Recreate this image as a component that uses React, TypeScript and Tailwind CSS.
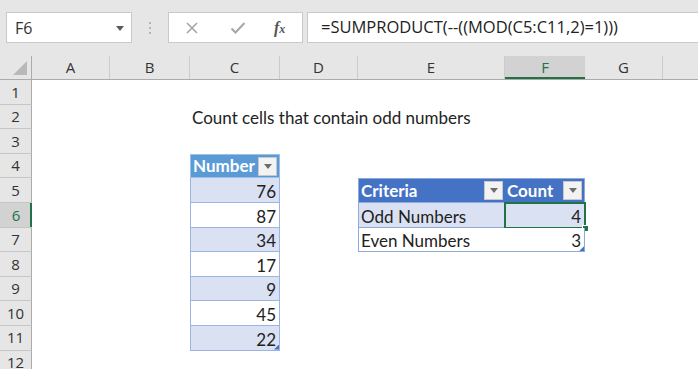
import React from 'react';

const cols = [
  { k: 'A', w: 'w-[78px]' },
  { k: 'B', w: 'w-[80px]' },
  { k: 'C', w: 'w-[90px]' },
  { k: 'D', w: 'w-[78px]' },
  { k: 'E', w: 'w-[147px]' },
  { k: 'F', w: 'w-[80px]' },
  { k: 'G', w: 'w-[78px]' },
  { k: 'H', w: 'w-[80px]' },
];

const rows = [1, 2, 3, 4, 5, 6, 7, 8, 9, 10, 11, 12];
const numbers: Record<number, string> = { 5: '76', 6: '87', 7: '34', 8: '17', 9: '9', 10: '45', 11: '22' };

const DropBtn = () => (
  <span className="absolute right-[2px] top-[2px] flex h-[19px] w-[19px] items-center justify-center border border-[#c8c8c8] bg-[#f3f3f3]">
    <span className="h-0 w-0 border-x-[4px] border-t-[5px] border-x-transparent border-t-[#6d6d6d]" />
  </span>
);

const ResizeMark = () => (
  <span className="absolute bottom-0 right-0 h-[5px] w-[5px] bg-[#4472c4] [clip-path:polygon(100%_0,100%_100%,0_100%)]" />
);

const renderCell = (r: number, c: string) => {
  // title text spills over from C2
  if (c === 'C' && r === 2)
    return (
      <span className="absolute bottom-[3px] left-[2px] whitespace-nowrap leading-[17px]">
        Count cells that contain odd numbers
      </span>
    );

  // first table: C4:C11
  if (c === 'C' && r === 4)
    return (
      <div className="absolute inset-0 flex items-center border border-[#9bc2e6] bg-[#5b9bd5] pl-[2px] font-bold text-white">
        Number
        <DropBtn />
      </div>
    );
  if (c === 'C' && r >= 5 && r <= 11)
    return (
      <div
        className={
          'absolute inset-0 flex items-end justify-end border-x border-b border-[#9db4e2] pb-[2px] pr-[3px] leading-[17px] ' +
          (r % 2 === 1 ? 'bg-[#d9e1f2]' : 'bg-white')
        }
      >
        {numbers[r]}
        {r === 11 && <ResizeMark />}
      </div>
    );

  // second table: E5:F7
  if (r === 5 && (c === 'E' || c === 'F'))
    return (
      <div
        className={
          'absolute inset-0 flex items-center border-y border-[#8eaadb] bg-[#4472c4] pl-[2px] font-bold text-white ' +
          (c === 'E' ? 'border-l' : 'border-r')
        }
      >
        {c === 'E' ? 'Criteria' : 'Count'}
        <DropBtn />
      </div>
    );
  if ((r === 6 || r === 7) && c === 'E')
    return (
      <div
        className={
          'absolute inset-0 flex items-end border-b border-l border-[#8eaadb] pb-[2px] pl-[2px] leading-[17px] ' +
          (r === 6 ? 'bg-[#d9e1f2]' : 'bg-white')
        }
      >
        {r === 6 ? 'Odd Numbers' : 'Even Numbers'}
      </div>
    );
  if ((r === 6 || r === 7) && c === 'F')
    return (
      <div
        className={
          'absolute inset-0 flex items-end justify-end border-b border-r border-[#8eaadb] pb-[2px] pr-[3px] leading-[17px] ' +
          (r === 6 ? 'bg-[#d9e1f2]' : 'bg-white')
        }
      >
        {r === 6 ? '4' : '3'}
        {r === 7 && <ResizeMark />}
      </div>
    );
  return null;
};

export default function App() {
  return (
    <div className="h-[369px] w-[698px] overflow-hidden bg-white font-['Open_Sans',sans-serif] text-[#222]">
      {/* formula bar */}
      <div className="flex h-[56px] items-start bg-[#e6e6e6] pl-[6px] pt-[12px]">
        <div className="relative flex h-[31px] w-[126px] items-center border border-[#c9c9c9] bg-white pl-[8px] text-[16px] text-[#333]">
          F6
          <span className="absolute right-[7px] top-[13px] h-0 w-0 border-x-[4px] border-t-[5px] border-x-transparent border-t-[#5a5a5a]" />
        </div>
        <div className="ml-[17px] mr-[17px] flex h-[31px] flex-col items-center justify-center gap-[3px]">
          <span className="h-[2px] w-[2px] bg-[#b4b4b4]" />
          <span className="h-[2px] w-[2px] bg-[#b4b4b4]" />
          <span className="h-[2px] w-[2px] bg-[#b4b4b4]" />
        </div>
        <div className="flex h-[31px] w-[135px] items-center border border-[#c9c9c9] bg-white">
          <svg width="14" height="14" viewBox="0 0 14 14" className="ml-[16px]">
            <path d="M2 2 L12 12 M12 2 L2 12" stroke="#a6a6a6" strokeWidth="1.6" fill="none" />
          </svg>
          <svg width="16" height="14" viewBox="0 0 16 14" className="ml-[31px]">
            <path d="M1.5 7.5 L5.5 11.5 L14.5 2" stroke="#a6a6a6" strokeWidth="2" fill="none" />
          </svg>
          <span className="ml-[28px] font-['Liberation_Serif',serif] text-[16px] font-bold italic text-[#555]">
            f<span className="text-[12px]">x</span>
          </span>
        </div>
        <div className="ml-[4px] flex h-[31px] flex-1 items-center border border-r-0 border-[#c9c9c9] bg-white pl-[13px] text-[16.5px] text-[#222]">
          =SUMPRODUCT(--((MOD(C5:C11,2)=1)))
        </div>
      </div>

      {/* column headers */}
      <div className="flex h-[24px] border-b border-[#ababab] bg-[#e6e6e6] text-[15px] text-[#333]">
        <div className="relative w-[32px] shrink-0 border-r border-[#ababab]">
          <span className="absolute bottom-[4px] right-[4px] h-[14px] w-[14px] bg-[#b9b9b9] [clip-path:polygon(100%_0,100%_100%,0_100%)]" />
        </div>
        {cols.map((col) => (
          <div
            key={col.k}
            className={
              col.w +
              ' relative flex shrink-0 items-center justify-center ' +
              (col.k === 'F'
                ? 'bg-[#d2d2d2] text-[#217346] shadow-[inset_0_-2px_0_#217346]'
                : 'border-r border-[#cbcbcb]')
            }
          >
            {col.k}
          </div>
        ))}
      </div>

      {/* rows */}
      {rows.map((r) => (
        <div key={r} className="flex h-[24.6px]">
          <div
            className={
              'flex w-[32px] shrink-0 items-center justify-center border-b text-[15px] ' +
              (r === 6
                ? 'border-b-[#c6c6c6] bg-[#d2d2d2] text-[#217346] shadow-[inset_-2px_0_0_#217346]'
                : 'border-r border-b-[#c6c6c6] border-r-[#ababab] bg-[#e6e6e6] text-[#333]')
            }
          >
            {r}
          </div>
          {cols.map((col) => (
            <div key={col.k} className={col.w + " relative shrink-0 font-['Lato',sans-serif] text-[17px] text-[#222]"}>
              {renderCell(r, col.k)}
              {r === 6 && col.k === 'F' && (
                <>
                  <span className="absolute -inset-[1px] border-2 border-[#217346]" />
                  <span className="absolute -bottom-[4px] -right-[4px] h-[7px] w-[7px] border border-white bg-[#217346]" />
                </>
              )}
            </div>
          ))}
        </div>
      ))}
    </div>
  );
}
